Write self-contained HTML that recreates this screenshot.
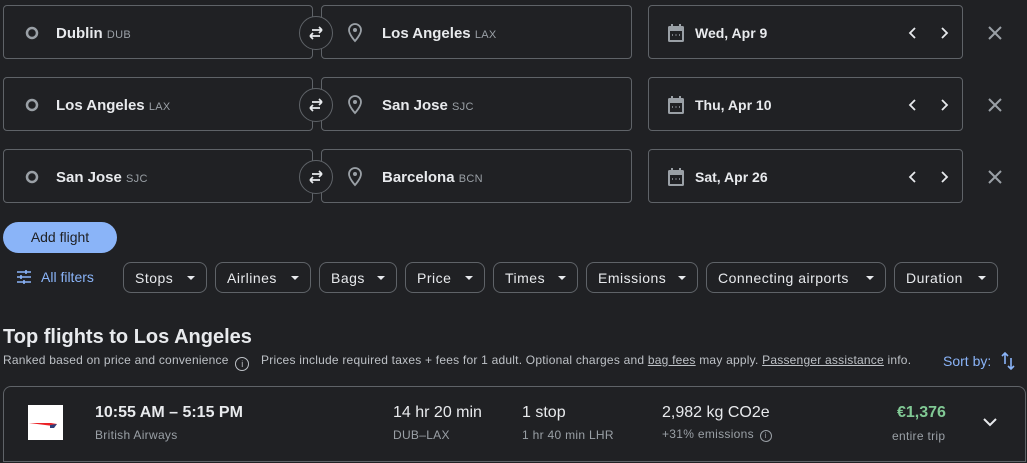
<!DOCTYPE html><html><head><style>
body{margin:0;width:1027px;height:463px;background:#202124;font-family:"Liberation Sans",Arial,sans-serif;color:#e8eaed;position:relative;overflow:hidden}
.a{position:absolute}
.box{position:absolute;border:1px solid #5f6368;border-radius:4px;height:54px;box-sizing:border-box}
.city{position:absolute;font-size:15px;font-weight:bold;top:19px;color:#e8eaed}
.city small{font-size:11px;color:#9aa0a6;font-weight:normal;letter-spacing:.3px}
.swap{position:absolute;width:34px;height:34px;border-radius:50%;border:1px solid #5f6368;background:#202124;box-sizing:border-box}
.chip{position:absolute;top:262px;height:31px;border:1px solid #5f6368;border-radius:8px;box-sizing:border-box;font-size:14px;letter-spacing:.5px;color:#e8eaed;padding:7px 0 0 11px}
.chip:after{content:"";position:absolute;right:11px;top:13px;border:4px solid transparent;border-top:4px solid #e8eaed}
.date{position:absolute;font-size:14px;top:19px;left:46px;font-weight:bold}
.sub{font-size:12px;color:#bdc1c6;letter-spacing:.22px}
</style></head><body>
<div class="box" style="left:3px;top:5px;width:310px"><svg class="a" style="left:21px;top:20px" width="14" height="14"><circle cx="7" cy="7" r="5" fill="none" stroke="#9aa0a6" stroke-width="2.5"/></svg><div class="city" style="left:52px">Dublin <small>DUB</small></div></div>
<div class="box" style="left:321px;top:5px;width:311px"><svg class="a" style="left:26px;top:17px" width="14" height="20" viewBox="0 0 14 20"><path d="M7 1C3.7 1 1 3.7 1 7c0 4.5 6 11 6 11s6-6.5 6-11c0-3.3-2.7-6-6-6z" fill="none" stroke="#9aa0a6" stroke-width="1.8"/><circle cx="7" cy="7" r="2" fill="#9aa0a6"/></svg><div class="city" style="left:60px">Los Angeles <small>LAX</small></div></div>
<div class="box" style="left:3px;top:77px;width:310px"><svg class="a" style="left:21px;top:20px" width="14" height="14"><circle cx="7" cy="7" r="5" fill="none" stroke="#9aa0a6" stroke-width="2.5"/></svg><div class="city" style="left:52px">Los Angeles <small>LAX</small></div></div>
<div class="box" style="left:321px;top:77px;width:311px"><svg class="a" style="left:26px;top:17px" width="14" height="20" viewBox="0 0 14 20"><path d="M7 1C3.7 1 1 3.7 1 7c0 4.5 6 11 6 11s6-6.5 6-11c0-3.3-2.7-6-6-6z" fill="none" stroke="#9aa0a6" stroke-width="1.8"/><circle cx="7" cy="7" r="2" fill="#9aa0a6"/></svg><div class="city" style="left:60px">San Jose <small>SJC</small></div></div>
<div class="box" style="left:3px;top:149px;width:310px"><svg class="a" style="left:21px;top:20px" width="14" height="14"><circle cx="7" cy="7" r="5" fill="none" stroke="#9aa0a6" stroke-width="2.5"/></svg><div class="city" style="left:52px">San Jose <small>SJC</small></div></div>
<div class="box" style="left:321px;top:149px;width:311px"><svg class="a" style="left:26px;top:17px" width="14" height="20" viewBox="0 0 14 20"><path d="M7 1C3.7 1 1 3.7 1 7c0 4.5 6 11 6 11s6-6.5 6-11c0-3.3-2.7-6-6-6z" fill="none" stroke="#9aa0a6" stroke-width="1.8"/><circle cx="7" cy="7" r="2" fill="#9aa0a6"/></svg><div class="city" style="left:60px">Barcelona <small>BCN</small></div></div>
<div class="swap" style="left:299px;top:16px"></div><div class="swap" style="left:299px;top:88px"></div><div class="swap" style="left:299px;top:160px"></div>
<svg class="a" style="left:306px;top:23px" width="20" height="20" viewBox="0 0 20 20"><path d="M4 13h10M4 13l3-3M4 13l3 3M16 7H6M16 7l-3-3M16 7l-3 3" fill="none" stroke="#e8eaed" stroke-width="1.7"/></svg>
<svg class="a" style="left:306px;top:95px" width="20" height="20" viewBox="0 0 20 20"><path d="M4 13h10M4 13l3-3M4 13l3 3M16 7H6M16 7l-3-3M16 7l-3 3" fill="none" stroke="#e8eaed" stroke-width="1.7"/></svg>
<svg class="a" style="left:306px;top:167px" width="20" height="20" viewBox="0 0 20 20"><path d="M4 13h10M4 13l3-3M4 13l3 3M16 7H6M16 7l-3-3M16 7l-3 3" fill="none" stroke="#e8eaed" stroke-width="1.7"/></svg>
<div class="box" style="left:648px;top:5px;width:315px"><svg class="a" style="left:18px;top:17px" width="18" height="20" viewBox="0 0 18 20"><rect x="1" y="3" width="16" height="16" rx="1.5" fill="#9aa0a6"/><rect x="3" y="8" width="12" height="9" fill="#202124"/><path d="M5 1v4M13 1v4" stroke="#9aa0a6" stroke-width="2"/><path d="M5 12h1M8.5 12h1M12 12h1" stroke="#9aa0a6" stroke-width="1.5"/></svg><div class="date">Wed, Apr 9</div><svg class="a" style="left:258px;top:20px" width="12" height="14"><path d="M8 2L3 7l5 5" fill="none" stroke="#e8eaed" stroke-width="1.8"/></svg><svg class="a" style="left:289px;top:20px" width="12" height="14"><path d="M4 2l5 5-5 5" fill="none" stroke="#e8eaed" stroke-width="1.8"/></svg></div>
<div class="box" style="left:648px;top:77px;width:315px"><svg class="a" style="left:18px;top:17px" width="18" height="20" viewBox="0 0 18 20"><rect x="1" y="3" width="16" height="16" rx="1.5" fill="#9aa0a6"/><rect x="3" y="8" width="12" height="9" fill="#202124"/><path d="M5 1v4M13 1v4" stroke="#9aa0a6" stroke-width="2"/><path d="M5 12h1M8.5 12h1M12 12h1" stroke="#9aa0a6" stroke-width="1.5"/></svg><div class="date">Thu, Apr 10</div><svg class="a" style="left:258px;top:20px" width="12" height="14"><path d="M8 2L3 7l5 5" fill="none" stroke="#e8eaed" stroke-width="1.8"/></svg><svg class="a" style="left:289px;top:20px" width="12" height="14"><path d="M4 2l5 5-5 5" fill="none" stroke="#e8eaed" stroke-width="1.8"/></svg></div>
<div class="box" style="left:648px;top:149px;width:315px"><svg class="a" style="left:18px;top:17px" width="18" height="20" viewBox="0 0 18 20"><rect x="1" y="3" width="16" height="16" rx="1.5" fill="#9aa0a6"/><rect x="3" y="8" width="12" height="9" fill="#202124"/><path d="M5 1v4M13 1v4" stroke="#9aa0a6" stroke-width="2"/><path d="M5 12h1M8.5 12h1M12 12h1" stroke="#9aa0a6" stroke-width="1.5"/></svg><div class="date">Sat, Apr 26</div><svg class="a" style="left:258px;top:20px" width="12" height="14"><path d="M8 2L3 7l5 5" fill="none" stroke="#e8eaed" stroke-width="1.8"/></svg><svg class="a" style="left:289px;top:20px" width="12" height="14"><path d="M4 2l5 5-5 5" fill="none" stroke="#e8eaed" stroke-width="1.8"/></svg></div>
<svg class="a" style="left:987px;top:25px" width="16" height="16"><path d="M2 2l12 12M14 2L2 14" stroke="#9aa0a6" stroke-width="2"/></svg>
<svg class="a" style="left:987px;top:97px" width="16" height="16"><path d="M2 2l12 12M14 2L2 14" stroke="#9aa0a6" stroke-width="2"/></svg>
<svg class="a" style="left:987px;top:169px" width="16" height="16"><path d="M2 2l12 12M14 2L2 14" stroke="#9aa0a6" stroke-width="2"/></svg>
<div class="a" style="left:3px;top:222px;width:114px;height:31px;border-radius:16px;background:#8ab4f8;color:#202124;font-size:14px;text-align:center;line-height:31px">Add flight</div>
<svg class="a" style="left:16px;top:269px" width="16" height="16" viewBox="0 0 16 16"><path d="M1 3h14M1 8h14M1 13h14" stroke="#8ab4f8" stroke-width="1.6"/><path d="M10 1v4M5 6v4M8 11v4" stroke="#8ab4f8" stroke-width="1.6"/></svg>
<div class="a" style="left:41px;top:269px;font-size:14px;color:#8ab4f8">All filters</div>
<div class="chip" style="left:123px;width:84px">Stops</div>
<div class="chip" style="left:215px;width:96px">Airlines</div>
<div class="chip" style="left:319px;width:78px">Bags</div>
<div class="chip" style="left:405px;width:80px">Price</div>
<div class="chip" style="left:493px;width:85px">Times</div>
<div class="chip" style="left:586px;width:112px">Emissions</div>
<div class="chip" style="left:706px;width:180px">Connecting airports</div>
<div class="chip" style="left:894px;width:104px">Duration</div>
<div class="a" style="left:3px;top:326px;font-size:20px;font-weight:bold">Top flights to Los Angeles</div>
<div class="a sub" style="left:3px;top:353px">Ranked based on price and convenience <span style="display:inline-block;width:12px;height:12px;border:1.3px solid #bdc1c6;border-radius:50%;font-size:9px;text-align:center;line-height:12px;vertical-align:-3px;margin-left:3px;letter-spacing:0">i</span></div>
<div class="a sub" style="left:261px;top:353px">Prices include required taxes + fees for 1 adult. Optional charges and <u>bag fees</u> may apply. <u>Passenger assistance</u> info.</div>
<div class="a" style="left:943px;top:353px;font-size:14px;color:#8ab4f8">Sort by:</div>
<svg class="a" style="left:1000px;top:351px" width="16" height="20" viewBox="0 0 16 20"><path d="M5 13V2M2 5l3-3 3 3M11 7v11M8 15l3 3 3-3" fill="none" stroke="#8ab4f8" stroke-width="1.6"/></svg>
<div class="a" style="left:3px;top:386px;width:1023px;height:76px;border:1px solid #5f6368;border-radius:8px 8px 0 0;box-sizing:border-box"></div>
<div class="a" style="left:28px;top:405px;width:35px;height:35px;background:#fff"><svg width="35" height="35"><path d="M1 18h22l6 1-4 2z" fill="#eb2226"/><path d="M22 20l7-1-3 4h-4z" fill="#2e3f7a"/></svg></div>
<div class="a" style="left:95px;top:404px;font-size:16px;font-weight:bold">10:55 AM – 5:15 PM</div>
<div class="a" style="left:95px;top:428px;font-size:12px;color:#9aa0a6;letter-spacing:.3px">British Airways</div>
<div class="a" style="left:393px;top:404px;font-size:16px">14 hr 20 min</div>
<div class="a" style="left:393px;top:428px;font-size:12px;color:#9aa0a6;letter-spacing:.3px">DUB–LAX</div>
<div class="a" style="left:522px;top:404px;font-size:16px">1 stop</div>
<div class="a" style="left:522px;top:428px;font-size:12px;color:#9aa0a6;letter-spacing:.3px">1 hr 40 min LHR</div>
<div class="a" style="left:662px;top:404px;font-size:16px">2,982 kg CO2e</div>
<div class="a" style="left:662px;top:427px;font-size:12px;color:#9aa0a6;letter-spacing:.3px">+31% emissions <span style="display:inline-block;width:10px;height:10px;border:1px solid #9aa0a6;border-radius:50%;font-size:8px;text-align:center;line-height:10px;margin-left:2px;letter-spacing:0">i</span></div>
<div class="a" style="left:897px;top:404px;font-size:16px;font-weight:bold;color:#81c995">€1,376</div>
<div class="a" style="left:892px;top:429px;font-size:12px;color:#9aa0a6;letter-spacing:.3px">entire trip</div>
<svg class="a" style="left:982px;top:416px" width="16" height="12"><path d="M2 3l6 6 6-6" fill="none" stroke="#e8eaed" stroke-width="2"/></svg>
</body></html>
